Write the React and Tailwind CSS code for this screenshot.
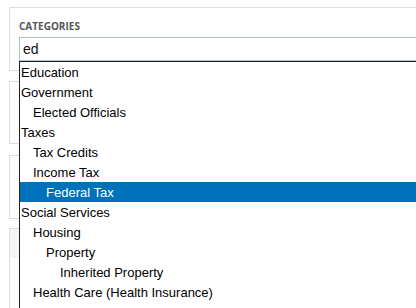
import React from "react";

const items = [
  { t: "Education", l: 0 },
  { t: "Government", l: 0 },
  { t: "Elected Officials", l: 1 },
  { t: "Taxes", l: 0 },
  { t: "Tax Credits", l: 1 },
  { t: "Income Tax", l: 1 },
  { t: "Federal Tax", l: 2, sel: true },
  { t: "Social Services", l: 0 },
  { t: "Housing", l: 1 },
  { t: "Property", l: 2 },
  { t: "Inherited Property", l: 3 },
  { t: "Health Care (Health Insurance)", l: 1 },
  { t: "Health Insurance", l: 2 },
];

const pads = ["pl-[1px]", "pl-[13px]", "pl-[26px]", "pl-[40px]"];

export default function App() {
  return (
    <div className="relative w-[416px] h-[308px] overflow-hidden bg-white font-['Liberation_Sans',Arial,sans-serif]">
      <div className="flex flex-col pl-[9px] pt-[7px] w-[460px]">
        <div className="relative border border-[#dddddd] h-[64px] pl-[9px] pt-[11px] z-10">
          <div className="font-['Open_Sans',sans-serif] font-bold text-[10px] leading-[14px] text-[#555555] tracking-normal">
            CATEGORIES
          </div>
          <div className="relative mt-[4px]">
            <div className="h-[24px] border border-[#a3c4e6] pl-[3px] text-[14px] leading-[22px] text-[#111111]">
              ed
            </div>
            <div className="absolute left-0 top-[24px] w-[460px] border-l border-t border-[#222222] bg-white">
              {items.map((it, i) => (
                <div
                  key={i}
                  className={`h-[20px] pt-[1px] leading-[20px] text-[13px] whitespace-nowrap ${pads[it.l]} ${
                    it.sel ? "bg-[#0071bb] text-white" : "text-black"
                  }`}
                >
                  {it.t}
                </div>
              ))}
            </div>
          </div>
        </div>
        <div className="mt-[10px] border border-[#dddddd] h-[63px]"></div>
        <div className="mt-[11px] border border-[#dddddd] h-[64px]"></div>
        <div className="mt-[9px] border border-[#dddddd] h-[100px] flex flex-col">
          <div className="h-[29px] bg-[#f5f5f5]"></div>
        </div>
      </div>
    </div>
  );
}
